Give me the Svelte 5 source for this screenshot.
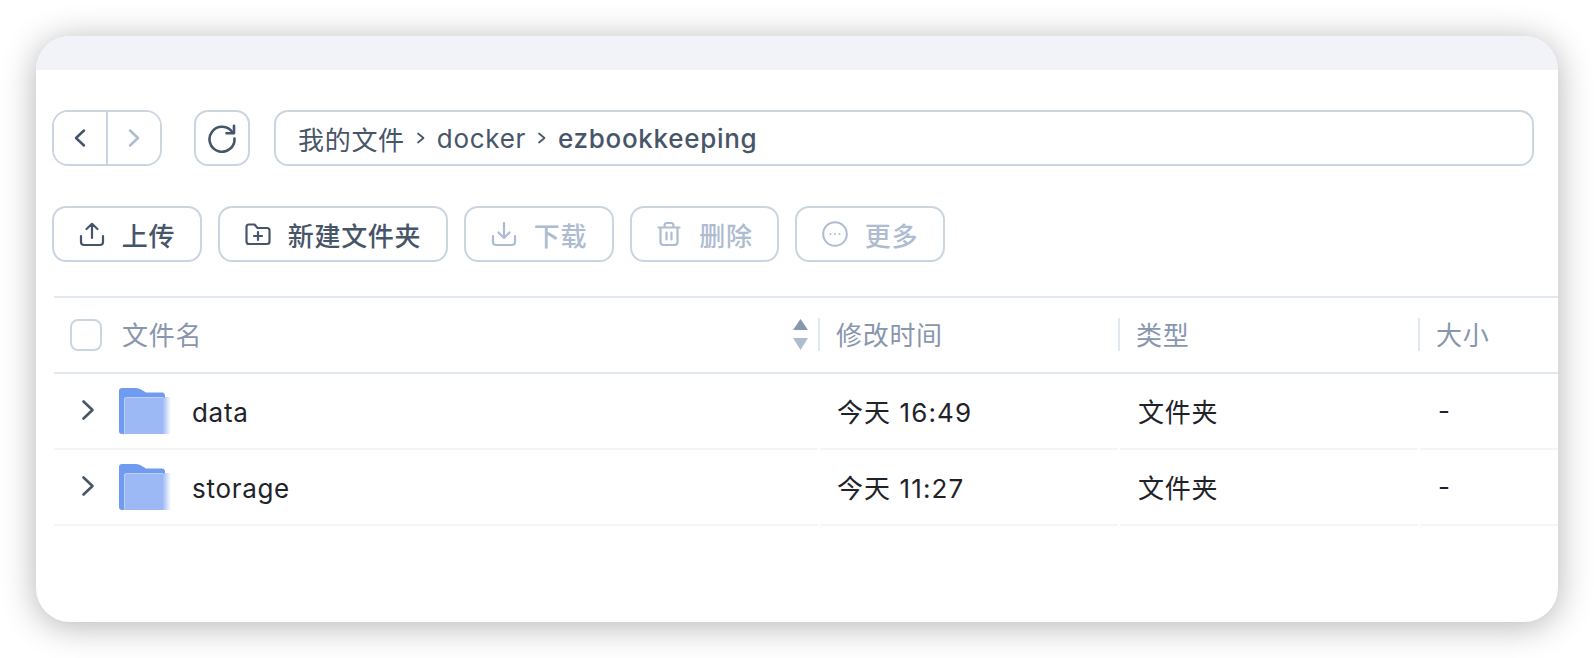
<script>
  const rows = [
    { name: 'data', time: '今天 16:49', type: '文件夹', size: '-' },
    { name: 'storage', time: '今天 11:27', type: '文件夹', size: '-' }
  ]
</script>

<div class="page">
  <div class="win">
    <div class="titlebar"></div>
    <div class="nav">
      <div class="navgroup">
        <button class="navbtn">
          <svg width="16" height="20" viewBox="0 0 16 20"><path d="M12 2.500 L4 10 L12 17.500" class="st" stroke="#475569" stroke-width="2.500"/></svg>
        </button>
        <button class="navbtn second">
          <svg width="16" height="20" viewBox="0 0 16 20"><path d="M4 2.500 L12 10 L4 17.500" class="st" stroke="#aebbd0" stroke-width="2.500"/></svg>
        </button>
      </div>
      <button class="refresh">
        <svg width="30" height="30" viewBox="0 0 30 30"><path d="M25.600 9.600 A12.500 12.500 0 1 0 27.500 15.500" class="st" stroke="#475569" stroke-width="2.600"/><path d="M27 2.800 V10.200 H19.500" class="st" stroke="#475569" stroke-width="2.600"/></svg>
      </button>
      <div class="path">
        <span>我的文件</span>
        <svg width="10" height="14" viewBox="0 0 10 14"><path d="M2 2.500 L7.500 7 L2 11.500" class="st" stroke="#475569" stroke-width="1.700"/></svg>
        <span>docker</span>
        <svg width="10" height="14" viewBox="0 0 10 14"><path d="M2 2.500 L7.500 7 L2 11.500" class="st" stroke="#475569" stroke-width="1.700"/></svg>
        <span class="cur">ezbookkeeping</span>
      </div>
    </div>

    <div class="tools">
      <button class="tool w150">
        <svg width="26" height="26" viewBox="0 0 26 26"><path d="M13 3 V17 M7.500 8 L13 2.800 L18.500 8 M2 15 V21 Q2 24 5 24 H21 Q24 24 24 21 V15" class="st" stroke="#475569" stroke-width="2.200"/></svg>
        上传
      </button>
      <button class="tool w230">
        <svg width="26" height="26" viewBox="0 0 26 26"><path d="M1.500 6 Q1.500 3.500 4 3.500 H9.500 L12.500 7 H22 Q24.500 7 24.500 9.500 V20.500 Q24.500 23 22 23 H4 Q1.500 23 1.500 20.500 Z M13 11 V19 M9 15 H17" class="st" stroke="#475569" stroke-width="2.200"/></svg>
        新建文件夹
      </button>
      <button class="tool w150 off">
        <svg width="26" height="26" viewBox="0 0 26 26"><path d="M13 2 V16.500 M7.500 11.500 L13 17 L18.500 11.500 M2 15 V21 Q2 24 5 24 H21 Q24 24 24 21 V15" class="st" stroke="#aebbd0" stroke-width="2.200"/></svg>
        下载
      </button>
      <button class="tool w149 off">
        <svg width="26" height="26" viewBox="0 0 26 26"><path d="M2.500 6.500 H23.500 M8.500 6 V4.500 Q8.500 2 11 2 H15 Q17.500 2 17.500 4.500 V6 M4.500 7 V21 Q4.500 24 7.500 24 H18.500 Q21.500 24 21.500 21 V7 M10.500 11.500 V18.500 M15.500 11.500 V18.500" class="st" stroke="#aebbd0" stroke-width="2.200"/></svg>
        删除
      </button>
      <button class="tool w150 off">
        <svg width="26" height="26" viewBox="0 0 26 26"><circle cx="13" cy="13" r="11.800" class="st" stroke="#aebbd0" stroke-width="2"/><circle cx="8.500" cy="13" r="1" fill="#aebbd0"/><circle cx="13" cy="13" r="1" fill="#aebbd0"/><circle cx="17.500" cy="13" r="1" fill="#aebbd0"/></svg>
        更多
      </button>
    </div>

    <div class="table">
      <div class="row head">
        <div class="cell first">
          <span class="check"></span>
          <span class="hname">文件名</span>
          <span class="sort">
            <svg width="15" height="31" viewBox="0 0 15 31"><path d="M7.500 0 L15 11 H0 Z" fill="#8896ae"/><path d="M0 19 H15 L7.500 31 Z" fill="#aebbd0"/></svg>
          </span>
        </div>
        <div class="cell div">修改时间</div>
        <div class="cell div">类型</div>
        <div class="cell div">大小</div>
      </div>
      {#each rows as r}
        <div class="row">
          <div class="cell first">
            <svg class="chev" width="14" height="22" viewBox="0 0 14 22"><path d="M2.500 2.500 L11.500 11 L2.500 19.500" class="st" stroke="#475569" stroke-width="2.600"/></svg>
            <svg class="folder" width="52" height="46" viewBox="0 0 52 46">
              <defs>
                <linearGradient id="fade" x1="0" x2="1" y1="0" y2="0">
                  <stop offset="0.820" stop-color="#9db9f5"/>
                  <stop offset="1" stop-color="#9db9f5" stop-opacity="0"/>
                </linearGradient>
              </defs>
              <path d="M0 3 Q0 0 3 0 H17 Q20 0 22 1.500 L27 4.500 H43 Q46 4.500 46 8 V10 H5 V46 H3 Q0 46 0 43 Z" fill="#6f9bf0"/>
              <path d="M5 11 Q5 9 8 9 H52 V46 H5 Z" fill="url(#fade)"/>
              <path d="M5.500 46 V11 Q5.500 9.500 8 9.500 H44" fill="none" stroke="#b9cef8" stroke-width="1"/>
            </svg>
            <span class="fname">{r.name}</span>
          </div>
          <div class="cell val time">{r.time}</div>
          <div class="cell val">{r.type}</div>
          <div class="cell val">{r.size}</div>
        </div>
      {/each}
    </div>
  </div>
</div>

<style>
  :global(body) {
    background: #fff;
    overflow: hidden;
  }
  .page {
    padding: 36px;
    height: 658px;
    box-sizing: border-box;
    overflow: hidden;
    font-family: Inter, "Noto Sans CJK SC", sans-serif;
    letter-spacing: 0.7px;
  }
  .win {
    height: 586px;
    background: #fff;
    border-radius: 34px;
    box-shadow: 0 4px 34px rgba(0, 0, 0, 0.3);
  }
  .titlebar {
    height: 34px;
    background: #f1f3f9;
    border-radius: 34px 34px 0 0;
  }
  .st {
    fill: none;
    stroke-linecap: round;
    stroke-linejoin: round;
  }
  button {
    font: inherit;
    letter-spacing: inherit;
    background: #fff;
    padding: 0;
    margin: 0;
    box-sizing: border-box;
  }
  .nav {
    display: flex;
    padding: 40px 24px 0 16px;
    height: 55px;
  }
  .navgroup {
    display: flex;
    width: 110px;
    height: 56px;
    box-sizing: border-box;
    border: 2px solid #cbd5e1;
    border-radius: 16px;
    overflow: hidden;
  }
  .navbtn {
    flex: 1;
    border: none;
    display: flex;
    align-items: center;
    justify-content: center;
  }
  .navbtn.second {
    border-left: 2px solid #cbd5e1;
  }
  .refresh {
    margin-left: 32px;
    width: 56px;
    height: 56px;
    border: 2px solid #cbd5e1;
    border-radius: 14px;
    display: flex;
    align-items: center;
    justify-content: center;
  }
  .path {
    margin-left: 24px;
    flex: 1;
    height: 56px;
    box-sizing: border-box;
    border: 2px solid #cbd5e1;
    border-radius: 14px;
    display: flex;
    align-items: center;
    gap: 11px;
    padding-left: 22px;
    font-size: 26px;
    color: #475569;
  }
  .path .cur {
    font-weight: 500;
  }
  .tools {
    display: flex;
    gap: 16px;
    padding: 41px 0 0 16px;
  }
  .tool {
    height: 56px;
    border: 2px solid #cbd5e1;
    border-radius: 14px;
    display: flex;
    align-items: center;
    justify-content: center;
    gap: 17px;
    font-size: 26px;
    font-weight: 500;
    color: #475569;
  }
  .w150 { width: 150px; }
  .w149 { width: 149px; }
  .w230 { width: 230px; }
  .tool.off {
    color: #aebbd0;
  }
  .table {
    margin: 34px 0 0 18px;
    border-top: 2px solid #e2e8f0;
  }
  .row {
    display: grid;
    grid-template-columns: 764px 300px 300px 1fr;
    height: 76px;
    box-sizing: border-box;
  }
  .row.head {
    border-bottom: 2px solid #e2e8f0;
    color: #8896ae;
    font-size: 26px;
    align-items: center;
  }
  .cell {
    display: flex;
    align-items: center;
    height: 100%;
    box-sizing: border-box;
  }
  .row:not(.head) .cell {
    border-bottom: 2px solid #f3f5f9;
  }
  .head .cell.div {
    position: relative;
    padding: 0 0 3px 18px;
  }
  .head .cell.div::before {
    content: "";
    position: absolute;
    left: 0;
    top: 20px;
    bottom: 21px;
    width: 2px;
    background: #e2e8f0;
  }
  .first {
    padding-left: 16px;
  }
  .check {
    width: 32px;
    height: 32px;
    box-sizing: border-box;
    border: 2px solid #cbd5e1;
    border-radius: 8px;
  }
  .hname {
    margin-left: 20px;
    padding-bottom: 3px;
    flex: 1;
  }
  .sort {
    display: flex;
    margin-right: 10px;
    padding-bottom: 1px;
  }
  .chev {
    margin: -3px 0 0 11px;
  }
  .folder {
    margin-left: 24px;
  }
  .fname {
    margin-left: 21px;
    padding-top: 3px;
    font-size: 26px;
    color: #1f2329;
  }
  .val {
    margin-left: 2px;
    padding: 0 0 1px 18px;
    font-size: 26px;
    color: #1f2329;
  }
  .val.time {
    padding-left: 17px;
    letter-spacing: 1.1px;
  }
</style>
